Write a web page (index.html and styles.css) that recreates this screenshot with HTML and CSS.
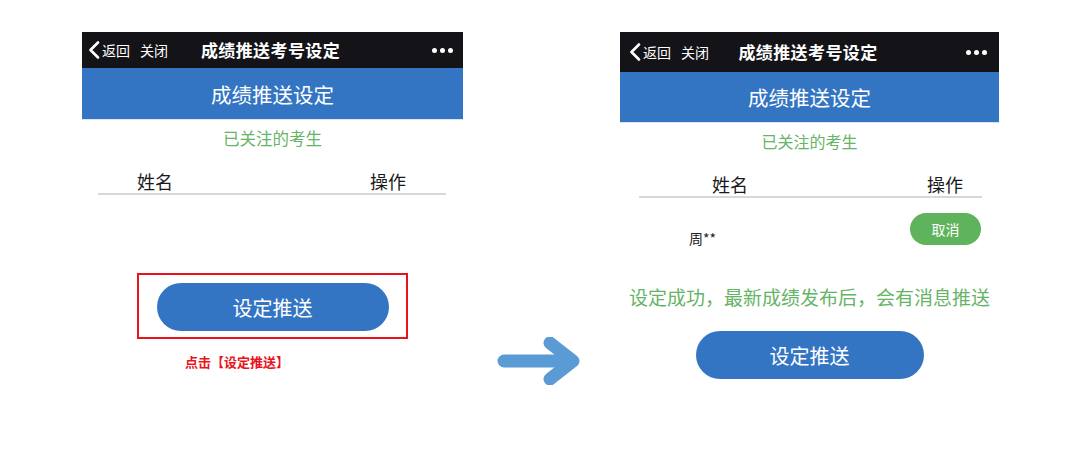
FILE: index.html
```html
<!DOCTYPE html>
<html lang="zh-CN">
<head>
<meta charset="utf-8">
<title>成绩推送考号设定</title>
<link rel="stylesheet" href="styles.css">
</head>
<body>
<div class="stage">
  <section class="phone phone-a">
    <header class="topbar">
      <div class="nav-left">
        <svg class="chev" width="12" height="18" viewBox="0 0 12 18"><polyline points="10,1.5 2.5,9 10,16.5" fill="none" stroke="#fff" stroke-width="2.6" stroke-linecap="round" stroke-linejoin="round"/></svg>
        <span class="back">返回</span>
        <span class="close">关闭</span>
      </div>
      <div class="nav-title">成绩推送考号设定</div>
      <div class="nav-right"><span class="dot"></span><span class="dot"></span><span class="dot"></span></div>
    </header>
    <div class="bluebar">成绩推送设定</div>
    <div class="subtitle">已关注的考生</div>
    <div class="thead">
      <span class="th-name">姓名</span>
      <span class="th-op">操作</span>
    </div>
    <div class="highlight">
      <button class="primary">设定推送</button>
    </div>
    <div class="hint">点击【设定推送】</div>
  </section>

  <div class="arrow">
    <svg width="86" height="48" viewBox="0 0 86 48"><line x1="7" y1="24" x2="74" y2="24" stroke="#5b9bd5" stroke-width="13" stroke-linecap="round"/><polyline points="53,6 76,24 53,42" fill="none" stroke="#5b9bd5" stroke-width="13" stroke-linecap="round" stroke-linejoin="round"/></svg>
  </div>

  <section class="phone phone-b">
    <header class="topbar">
      <div class="nav-left">
        <svg class="chev" width="12" height="18" viewBox="0 0 12 18"><polyline points="10,1.5 2.5,9 10,16.5" fill="none" stroke="#fff" stroke-width="2.6" stroke-linecap="round" stroke-linejoin="round"/></svg>
        <span class="back">返回</span>
        <span class="close">关闭</span>
      </div>
      <div class="nav-title">成绩推送考号设定</div>
      <div class="nav-right"><span class="dot"></span><span class="dot"></span><span class="dot"></span></div>
    </header>
    <div class="bluebar">成绩推送设定</div>
    <div class="subtitle">已关注的考生</div>
    <div class="thead">
      <span class="th-name">姓名</span>
      <span class="th-op">操作</span>
    </div>
    <div class="trow">
      <span class="td-name">周**</span>
      <button class="cancel">取消</button>
    </div>
    <div class="message">设定成功，最新成绩发布后，会有消息推送</div>
    <button class="primary">设定推送</button>
  </section>
</div>
</body>
</html>
```
FILE: styles.css
```css
* { box-sizing: border-box; }
html, body { margin: 0; padding: 0; background: #fff; }
body {
  font-family: "Noto Sans CJK SC", "Noto Sans", "Liberation Sans", sans-serif;
  width: 1080px;
  height: 465px;
  overflow: hidden;
}
.stage {
  display: flex;
  align-items: flex-start;
  padding: 32px 0 0 82px;
}
.phone { display: flex; flex-direction: column; }
.phone-a { width: 381px; }
.phone-b { width: 379px; margin-left: 37px; }
.arrow { width: 86px; height: 48px; margin: 305px 0 0 34px; }
.arrow svg { display: block; }

.topbar {
  background: #141418;
  display: grid;
  grid-template-columns: 1fr auto 1fr;
  align-items: center;
  color: #fff;
}
.phone-a .topbar { height: 36px; padding: 0 10px 0 6px; }
.phone-b .topbar { height: 40px; padding: 0 12px 0 9px; }
.nav-left { display: flex; align-items: center; font-size: 14px; line-height: 18px; }
.chev { display: block; margin-right: 2px; }
.close { margin-left: 10px; }
.nav-title { font-size: 17px; font-weight: bold; letter-spacing: 0.4px; line-height: 22px; }
.nav-right { display: flex; justify-content: flex-end; gap: 3px; }
.dot { width: 5px; height: 5px; border-radius: 50%; background: #fff; }

.bluebar {
  background: #3375c2;
  color: #fff;
  font-size: 20.5px;
  display: flex;
  align-items: center;
  justify-content: center;
  border-bottom: 1px solid #dbe4ee;
}
.phone-a .bluebar { height: 52px; }
.phone-b .bluebar { height: 51px; }

.subtitle {
  color: #66b466;
  font-size: 16.5px;
  line-height: 20px;
  text-align: center;
  margin-top: 8px;
}
.phone-b .subtitle { font-size: 16px; }
.thead {
  display: flex;
  font-size: 18px;
  line-height: 24px;
  color: #1a1a1a;
  border-bottom: 2px solid #d8d8d8;
  margin-top: 21px;
}
.phone-a .thead { margin-left: 16px; margin-right: 17px; }
.phone-a .th-name { margin-left: 39px; }
.phone-a .th-op { margin-left: auto; margin-right: 40px; }
.phone-b .thead { margin-left: 19px; margin-right: 17px; }
.phone-b .th-name { margin-left: 73px; }
.phone-b .th-op { margin-left: auto; margin-right: 19px; }

.primary {
  display: block;
  border: none;
  border-radius: 24px;
  background: #3375c2;
  color: #fff;
  font-family: inherit;
  font-size: 20px;
  height: 48px;
  padding: 0;
  margin: 0 auto;
}
.phone-a .primary { width: 232px; }
.phone-b .primary { width: 228px; margin-top: 22px; }

.highlight {
  width: 271px;
  margin: 78px auto 0;
  border: 2px solid #e8141c;
  padding: 8px 0 6px;
}
.hint {
  color: #e8141c;
  font-size: 13px;
  font-weight: bold;
  line-height: 16px;
  margin: 15px 0 0 103px;
}

.trow {
  display: flex;
  align-items: flex-start;
  margin: 15px 18px 0 19px;
}
.td-name {
  font-size: 14px;
  line-height: 18px;
  color: #222;
  margin: 16px 0 0 50px;
}
.cancel {
  margin-left: auto;
  width: 71px;
  height: 32px;
  border: none;
  border-radius: 16px;
  background: #5fb35c;
  color: #fff;
  font-family: inherit;
  font-size: 14px;
  padding: 0;
}
.message {
  color: #66b466;
  font-size: 19px;
  line-height: 24px;
  text-align: center;
  white-space: nowrap;
  margin-top: 38px;
}
```
